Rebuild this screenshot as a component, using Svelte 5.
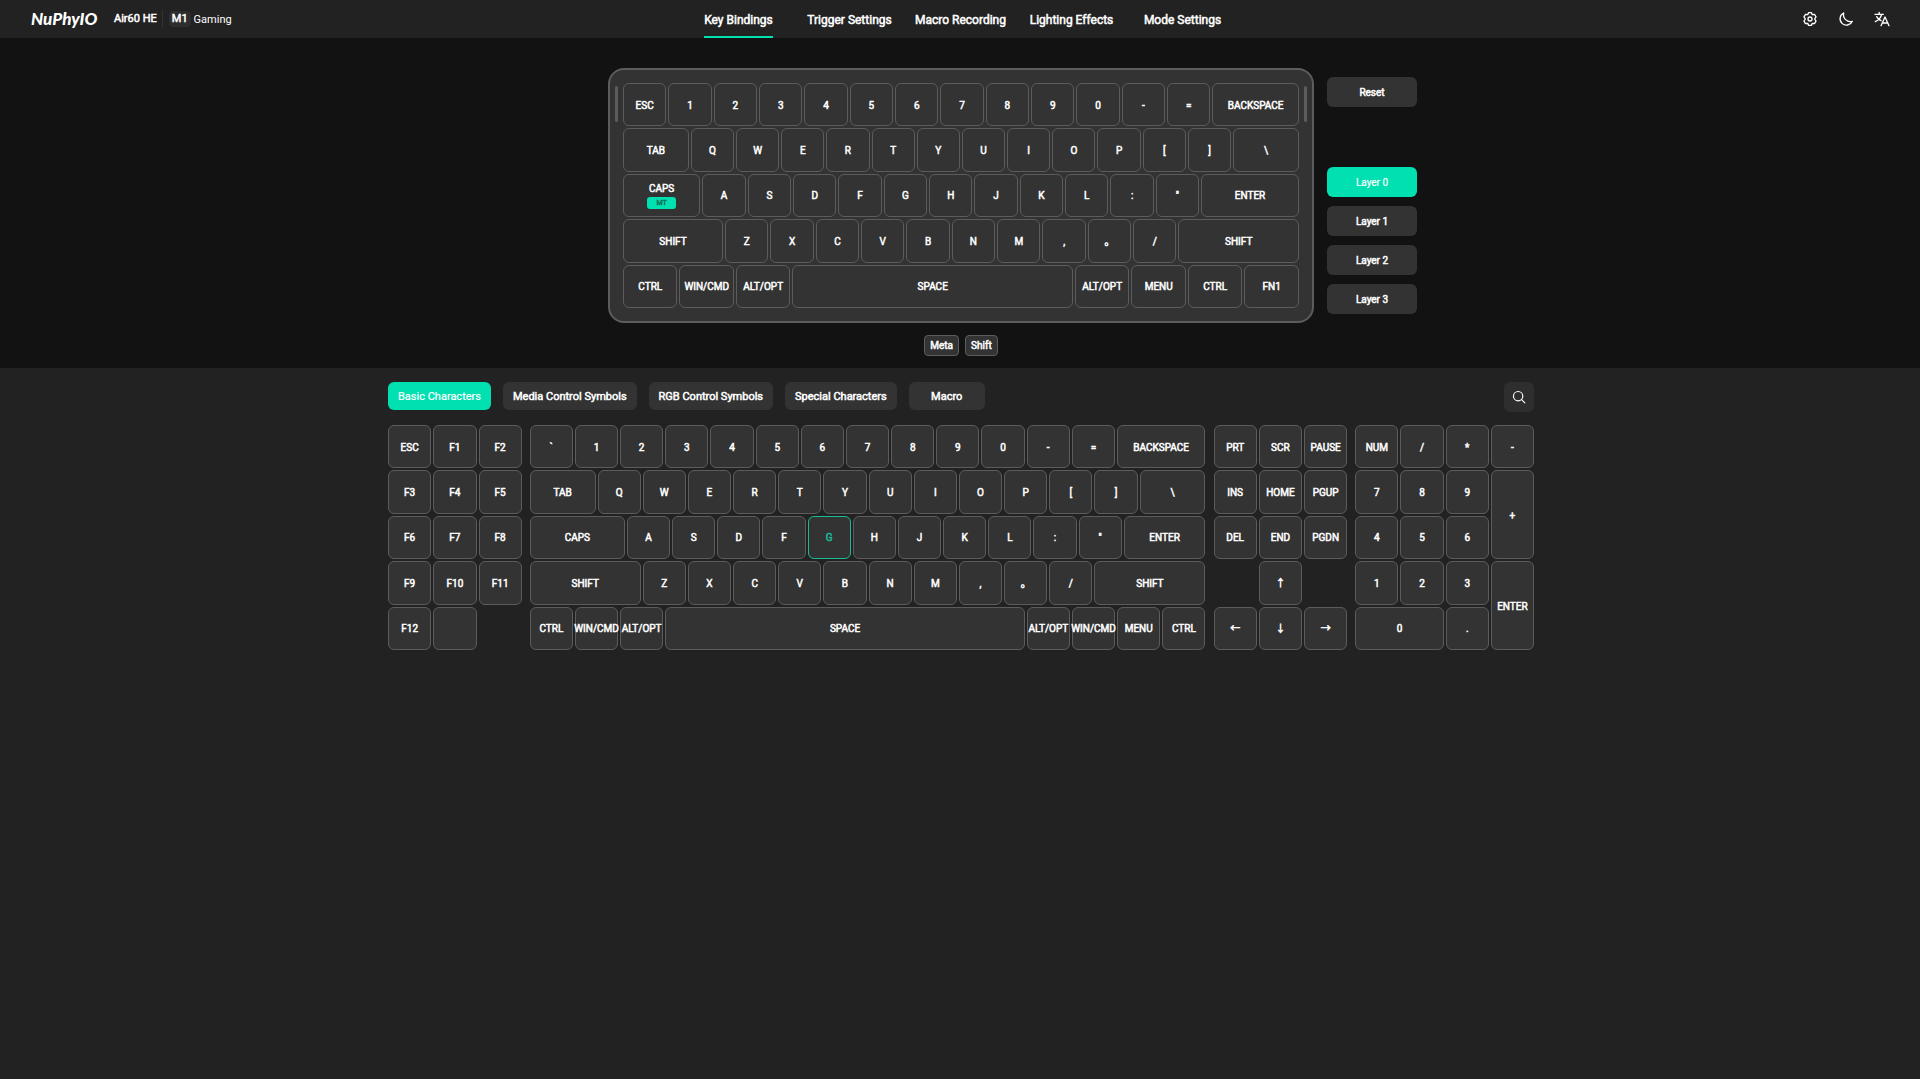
<script lang="ts">
	type Key = { label: string; w: number; tag?: string };

	const navItems = ['Key Bindings', 'Trigger Settings', 'Macro Recording', 'Lighting Effects', 'Mode Settings'];
	const layers = ['Layer 0', 'Layer 1', 'Layer 2', 'Layer 3'];
	const tabs = ['Basic Characters', 'Media Control Symbols', 'RGB Control Symbols', 'Special Characters', 'Macro'];

	let activeNav = $state('Key Bindings');
	let activeLayer = $state('Layer 0');
	let activeTab = $state('Basic Characters');
	let hovered = $state('G');

	// "TAB@1.5" is a key 1.5 units wide, no suffix means one unit; "#MT" adds a tag
	function row(text: string): Key[] {
		return text.split(' ').map((item) => {
			const [, label, w, tag] = item.match(/^(.+?)(?:@([\d.]+))?(?:#(\w+))?$/) ?? [];
			return { label, w: Number(w ?? 1), tag };
		});
	}

	const board = [
		row('ESC 1 2 3 4 5 6 7 8 9 0 - = BACKSPACE@1.95'),
		row('TAB@1.5 Q W E R T Y U I O P [ ] \\@1.5'),
		row('CAPS@1.75#MT A S D F G H J K L : " ENTER@2.2'),
		row('SHIFT@2.25 Z X C V B N M , 。 / SHIFT@2.7'),
		row('CTRL@1.25 WIN/CMD@1.25 ALT/OPT@1.25 SPACE@6.25 ALT/OPT@1.25 MENU@1.25 CTRL@1.25 FN1@1.25')
	];

	const mainKeys = [
		row('` 1 2 3 4 5 6 7 8 9 0 - = BACKSPACE@2'),
		row('TAB@1.5 Q W E R T Y U I O P [ ] \\@1.5'),
		row('CAPS@2.15 A S D F G H J K L : " ENTER@1.85'),
		row('SHIFT@2.5 Z X C V B N M , 。 / SHIFT@2.5'),
		row('CTRL WIN/CMD ALT/OPT SPACE@8 ALT/OPT WIN/CMD MENU CTRL')
	];

	const fnKeys = ['ESC', 'F1', 'F2', 'F3', 'F4', 'F5', 'F6', 'F7', 'F8', 'F9', 'F10', 'F11', 'F12', ''];
	const navKeys = ['PRT', 'SCR', 'PAUSE', 'INS', 'HOME', 'PGUP', 'DEL', 'END', 'PGDN', null, '↑', null, '←', '↓', '→'];
	const numKeys = ['NUM', '/', '*', '-', '7', '8', '9', '+', '4', '5', '6', '1', '2', '3', 'ENTER', '0', '.'];
	const numClass: Record<string, string> = { '+': 'tall', ENTER: 'tall', '0': 'wide' };

	const total = (keys: Key[]) => keys.reduce((sum, key) => sum + key.w, 0);
</script>

{#snippet keyRows(rows: Key[][], pick: string)}
	{#each rows as keys}
		<div class="row">
			{#each keys as key}
				<button
					class="key"
					class:hot={key.label === pick}
					style:width="calc({(key.w / total(keys)) * 100}% - 2px)"
				>
					<span>{key.label}</span>
					{#if key.tag}<small>{key.tag}</small>{/if}
				</button>
			{/each}
		</div>
	{/each}
{/snippet}

<header>
	<div class="brand">
		<span class="logo">NuPhyIO</span>
		<span class="model">Air60 HE</span>
		<span class="mode"><b>M1</b>Gaming</span>
	</div>
	<nav>
		{#each navItems as item}
			<a href="#top" class:active={item === activeNav} onclick={() => (activeNav = item)}>{item}</a>
		{/each}
	</nav>
	<div class="tools">
		<button aria-label="Settings">
			<svg viewBox="0 0 24 24" width="16" height="16">
				<path d="M8.500 5.500 10 2.500h4l1.500 3 3.500-.2 2 3.400L19 12l2 3.300-2 3.400-3.500-.2-1.500 3h-4l-1.500-3-3.500.2-2-3.400L5 12 3 8.700l2-3.400z" />
				<circle cx="12" cy="12" r="3" />
			</svg>
		</button>
		<button aria-label="Dark mode">
			<svg viewBox="0 0 24 24" width="16" height="16">
				<path d="M8.500 3A9.600 9.600 0 1 0 21.500 15.500 10.500 10.500 0 0 1 8.500 3z" />
			</svg>
		</button>
		<button aria-label="Language">
			<svg viewBox="0 0 24 24" width="16" height="16">
				<path d="M1.500 5H14M7.800 2V5M11.500 5C10.500 9.500 7 13.500 2 16M4 8.500C5.500 11.500 8 13.500 10.500 14.500M10.500 22 16.500 9 22.500 22M12.500 18H20.500" />
			</svg>
		</button>
	</div>
</header>

<section class="device">
	<div class="stage">
		<div class="board">
			{@render keyRows(board, '')}
		</div>
		<div class="side">
			<button class="pill">Reset</button>
			<div class="layers">
				{#each layers as layer}
					<button class="pill" class:active={layer === activeLayer} onclick={() => (activeLayer = layer)}>{layer}</button>
				{/each}
			</div>
		</div>
	</div>
	<div class="mods">
		<button>Meta</button>
		<button>Shift</button>
	</div>
</section>

<section class="picker">
	<div class="inner">
		<div class="tabs">
			{#each tabs as tab}
				<button class:active={tab === activeTab} onclick={() => (activeTab = tab)}>{tab}</button>
			{/each}
			<button class="search" aria-label="Search">
				<svg viewBox="0 0 24 24" width="14" height="14">
					<circle cx="10.500" cy="10.500" r="8" />
					<path d="M16.500 16.500 22 22" />
				</svg>
			</button>
		</div>
		<div class="keys">
			<div class="pad three">
				{#each fnKeys as label}
					<button class="key" aria-label={label || 'Empty'}>{label}</button>
				{/each}
			</div>
			<div class="main">
				{@render keyRows(mainKeys, hovered)}
			</div>
			<div class="pad three">
				{#each navKeys as label}
					{#if label === null}
						<span></span>
					{:else}
						<button class="key">{label}</button>
					{/if}
				{/each}
			</div>
			<div class="pad four">
				{#each numKeys as label}
					<button class="key {numClass[label] ?? ''}">{label}</button>
				{/each}
			</div>
		</div>
	</div>
</section>

<style>
	:global(body) {
		background: #222;
		color: #fff;
		font-family: Roboto, 'Noto Sans CJK SC', sans-serif;
		font-size: 11px;
	}

	button {
		font: inherit;
		color: inherit;
		border: none;
		padding: 0;
		cursor: pointer;
	}

	/* regular cut with a thin outline, narrower than the bold one */
	button,
	nav a,
	.model,
	.mode b {
		font-weight: 400;
		-webkit-text-stroke: 0.5px currentColor;
	}

	svg {
		display: block;
		fill: none;
		stroke: currentColor;
		stroke-width: 2;
		stroke-linecap: round;
		stroke-linejoin: round;
	}

	header {
		display: grid;
		grid-template-columns: 1fr auto 1fr;
		align-items: center;
		height: 38px;
		padding: 0 30px 0 31px;
		background: #222;
	}

	.brand {
		display: flex;
		align-items: center;
	}

	.logo {
		width: 83px;
		font-family: Lato, sans-serif;
		font-size: 17px;
		font-style: italic;
		font-weight: 900;
		line-height: 20px;
	}

	.model {
		padding-right: 5px;
		border-right: 1px solid #333;
		line-height: 18px;
	}

	.mode {
		display: flex;
		align-items: center;
		gap: 3px;
		padding-left: 6px;
	}

	.mode b {
		padding: 0 3px;
		border-radius: 4px;
		background: #2e2e2e;
		line-height: 16px;
	}

	nav {
		display: grid;
		grid-template-columns: repeat(5, 111px);
		justify-items: center;
	}

	nav a {
		box-sizing: border-box;
		height: 38px;
		border-bottom: 2px solid transparent;
		color: #fff;
		font-size: 12px;
		line-height: 40px;
		text-decoration: none;
	}

	nav a.active {
		border-color: #00e0b0;
	}

	.tools {
		display: flex;
		justify-content: flex-end;
		gap: 20px;
	}

	.tools button {
		background: none;
	}

	.device {
		padding: 30px 0 12px 2px;
		background: #121212;
	}

	.stage {
		display: grid;
		grid-template-columns: 1fr 706px 1fr;
		column-gap: 13px;
	}

	.board {
		position: relative;
		grid-column: 2;
		box-sizing: border-box;
		padding: 12px;
		border: 2px solid #5c5c5c;
		border-radius: 16px;
		background: #333;
	}

	/* light strips on both edges of the case */
	.board::before,
	.board::after {
		content: '';
		position: absolute;
		top: 16px;
		width: 3px;
		height: 36px;
		border-radius: 2px;
		background: #5c5c5c;
	}

	.board::before {
		left: 5px;
	}

	.board::after {
		right: 5px;
	}

	.board,
	.main {
		display: grid;
		grid-auto-rows: 1fr;
	}

	.board {
		height: 255px;
	}

	.row {
		display: flex;
	}

	.key {
		display: flex;
		flex-direction: column;
		align-items: center;
		justify-content: center;
		box-sizing: border-box;
		min-width: 0;
		margin: 1px;
		padding-top: 2px;
		border: 1px solid #5c5c5c;
		border-radius: 6px;
		background: #333;
		font-size: 10px;
		line-height: 12px;
		white-space: nowrap;
	}

	.key.hot {
		border-color: #1abc98;
		color: #1abc98;
	}

	.key small {
		width: 29px;
		margin-top: 2px;
		border-radius: 3px;
		background: #00e0b0;
		color: #14705c;
		font-size: 7px;
		line-height: 12px;
	}

	.side {
		display: flex;
		flex-direction: column;
		justify-content: space-between;
		align-items: flex-start;
		padding: 9px 0;
	}

	.pill {
		width: 90px;
		height: 30px;
		border-radius: 6px;
		background: #333;
		font-size: 10px;
	}

	.layers {
		display: flex;
		flex-direction: column;
		gap: 9px;
	}

	.pill.active,
	.tabs .active {
		background: #00e0b0;
		-webkit-text-stroke-width: 0.2px;
	}

	.mods {
		display: flex;
		justify-content: center;
		gap: 6px;
		margin-top: 12px;
	}

	.mods button {
		box-sizing: border-box;
		height: 21px;
		padding: 0 5px;
		border: 1px solid #5c5c5c;
		border-radius: 4px;
		background: #333;
		font-size: 10px;
	}

	.picker {
		padding: 14px 0 0 2px;
	}

	.inner {
		max-width: 1148px;
		margin: 0 auto;
	}

	.tabs {
		display: flex;
		gap: 12px;
		padding: 0 1px;
	}

	.tabs button {
		min-width: 76px;
		height: 28px;
		padding: 0 10px;
		border-radius: 6px;
		background: #333;
	}

	.tabs button.active {
		background: #00e0b0;
	}

	.tabs .search {
		display: grid;
		place-items: center;
		min-width: 30px;
		height: 30px;
		margin-left: auto;
		padding: 0;
		background: #2e2e2e;
	}

	.keys {
		display: grid;
		grid-template-columns: 136fr 679fr 136fr 181fr;
		gap: 6px;
		height: 227px;
		margin-top: 12px;
	}

	.pad {
		display: grid;
		grid-template-rows: repeat(5, 1fr);
	}

	.three {
		grid-template-columns: repeat(3, 1fr);
	}

	.four {
		grid-template-columns: repeat(4, 1fr);
	}

	.tall {
		grid-row: span 2;
	}

	.wide {
		grid-column: span 2;
	}
</style>
